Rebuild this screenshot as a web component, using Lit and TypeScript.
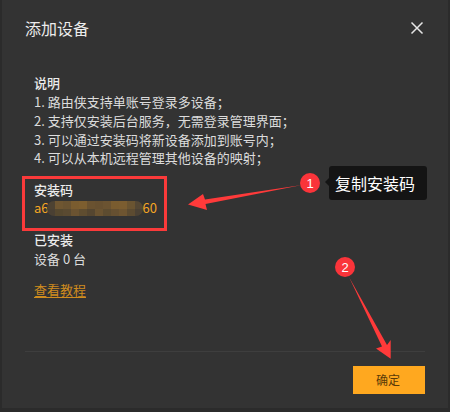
import { LitElement, html, css, svg } from "lit";
import { customElement } from "lit/decorators.js";

const MOSAIC = [
  ["#4d4232", "#6f5631", "#6a5331", "#7a5c2f", "#7d5e2f", "#6a5230", "#675030", "#6b5331", "#7a5c2f", "#7b5d30", "#6a5431", "#544734"],
  ["#4a4033", "#56482f", "#5a4a31", "#6b5331", "#5f4d30", "#554630", "#6a5331", "#5d4c30", "#665031", "#6e5531", "#5c4b31", "#4b4134"],
];

@customElement("app-root")
export class AppRoot extends LitElement {
  static styles = css`
    :host {
      display: block;
      width: 450px;
      height: 412px;
      position: relative;
      overflow: hidden;
      background: #2b2b2b;
      font-family: "Noto Sans CJK SC", "Liberation Sans", sans-serif;
      color: #dcdcdc;
    }
    .dialog {
      box-sizing: border-box;
      height: 408px;
      margin: 0 2px 0 2px;
      background: #333333;
      display: flex;
      flex-direction: column;
      padding: 0 23px 14px 23px;
    }
    .head {
      display: flex;
      justify-content: space-between;
      align-items: center;
      height: 56px;
      flex: none;
    }
    .title {
      font-size: 16px;
      color: #ececec;
    }
    .close {
      margin-right: 1px;
    }
    .body {
      flex: 1;
      padding: 18px 0 0 9px;
      font-size: 13px;
      line-height: 18.7px;
    }
    .strong {
      font-weight: 500;
      color: #ececec;
    }
    .lead {
      margin-bottom: 0.5px;
    }
    .block {
      margin-bottom: 12.5px;
    }
    .code-block {
      margin-bottom: 13px;
    }
    .code {
      color: #f5a623;
      display: flex;
      align-items: center;
    }
    .mosaic {
      display: grid;
      grid-template-columns: repeat(12, 8px);
      grid-auto-rows: 7.5px;
      margin: 0 0 0 -2px;
      border-radius: 7px;
      overflow: hidden;
    }
    .link {
      color: #d08c1e;
      text-decoration: underline;
      text-underline-offset: 2px;
      display: block;
      margin-top: 1.5px;
    }
    .foot {
      flex: none;
      border-top: 1px solid #3e3e3e;
      padding-top: 14px;
      display: flex;
      justify-content: flex-end;
    }
    .btn {
      width: 72px;
      height: 28px;
      border: none;
      padding: 0 2px 2px 0;
      background: #ffa81f;
      color: #5a3a08;
      font: 12px "Noto Sans CJK SC", sans-serif;
    }
    .overlay {
      position: absolute;
      inset: 0;
      pointer-events: none;
    }
    .tip {
      position: absolute;
      left: 329px;
      top: 166px;
      width: 98px;
      height: 34px;
      box-sizing: border-box;
      padding-left: 6px;
      background: #141414;
      border-radius: 3px;
      color: #fff;
      font-size: 16px;
      display: flex;
      align-items: center;
    }
    .tip::before {
      content: "";
      position: absolute;
      left: -4px;
      top: 12px;
      border: 4px solid transparent;
      border-left: none;
      border-right-color: #141414;
    }
    .marker {
      position: absolute;
      width: 20px;
      height: 20px;
      border-radius: 50%;
      background: #fa343a;
      color: #fff;
      font: 400 13px "Liberation Sans", sans-serif;
      display: flex;
      align-items: center;
      justify-content: center;
    }
    .m1 {
      left: 300px;
      top: 173px;
    }
    .m2 {
      left: 335px;
      top: 257px;
    }
    .redbox {
      position: absolute;
      left: 22px;
      top: 176px;
      width: 145px;
      height: 55px;
      box-sizing: border-box;
      border: 3px solid #fa3a3a;
    }
    svg {
      display: block;
    }
  `;

  render() {
    return html`
      <div class="dialog">
        <div class="head">
          <span class="title">添加设备</span>
          <svg class="close" width="14" height="14" viewBox="0 0 14 14">
            <path d="M1.5 1.5L12.5 12.5M12.5 1.5L1.5 12.5" stroke="#e6e6e6" stroke-width="1.5" fill="none" />
          </svg>
        </div>
        <div class="body">
          <div class="block">
            <div class="strong lead">说明</div>
            <div>1. 路由侠支持单账号登录多设备；</div>
            <div>2. 支持仅安装后台服务，无需登录管理界面；</div>
            <div>3. 可以通过安装码将新设备添加到账号内；</div>
            <div>4. 可以从本机远程管理其他设备的映射；</div>
          </div>
          <div class="code-block">
            <div class="strong">安装码</div>
            <div class="code">
              <span>a6</span>
              <div class="mosaic">
                ${MOSAIC.flat().map((c) => html`<i style="background:${c}"></i>`)}
              </div>
              <span>60</span>
            </div>
          </div>
          <div class="block">
            <div class="strong">已安装</div>
            <div>设备 0 台</div>
          </div>
          <a class="link">查看教程</a>
        </div>
        <div class="foot">
          <button class="btn">确定</button>
        </div>
      </div>
      <div class="overlay">
        <div class="redbox"></div>
        <svg width="450" height="412" viewBox="0 0 450 412">
          ${svg`<polygon points="302,185 205,199.5 203,194 188,204.5 207,210 205.5,204" fill="#ff3a3a" />
          <polygon points="349,277 382,346.5 376,348.5 390.7,358.7 390.7,340 387,345" fill="#ff3a3a" />`}
        </svg>
        <div class="marker m1">1</div>
        <div class="marker m2">2</div>
        <div class="tip">复制安装码</div>
      </div>
    `;
  }
}
